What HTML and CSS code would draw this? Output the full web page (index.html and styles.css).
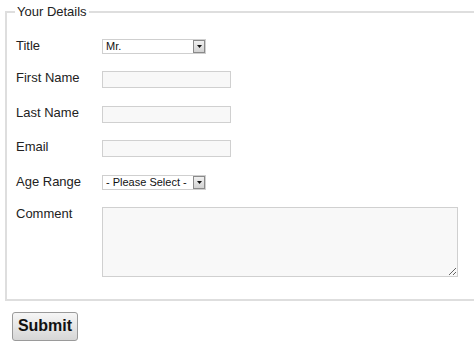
FILE: index.html
```html
<!DOCTYPE html>
<html lang="en">
<head>
    <meta charset="UTF-8">
    <title>Your Details</title>
    <link rel="stylesheet" href="styles.css">
</head>
<body>
    <form class="details-form">
        <fieldset class="details">
            <legend>Your Details</legend>
            <div class="form-grid">
                <label for="title">Title</label>
                <div class="select-box">
                    <select id="title">
                        <option>Mr.</option>
                        <option>Mrs.</option>
                        <option>Ms.</option>
                    </select>
                    <span class="arrow"><svg width="5" height="3" viewBox="0 0 5 3"><path d="M0 0h5L2.5 3z" fill="#111"/></svg></span>
                </div>

                <label for="first-name">First Name</label>
                <input type="text" id="first-name">

                <label for="last-name">Last Name</label>
                <input type="text" id="last-name">

                <label for="email">Email</label>
                <input type="text" id="email">

                <label for="age">Age Range</label>
                <div class="select-box">
                    <select id="age">
                        <option>- Please Select -</option>
                        <option>18 - 25</option>
                        <option>26 - 40</option>
                        <option>41+</option>
                    </select>
                    <span class="arrow"><svg width="5" height="3" viewBox="0 0 5 3"><path d="M0 0h5L2.5 3z" fill="#111"/></svg></span>
                </div>

                <label for="comment">Comment</label>
                <textarea id="comment"></textarea>
            </div>
        </fieldset>
        <button type="submit" class="submit-button">Submit</button>
    </form>
</body>
</html>
```

FILE: styles.css
```css
body {
    margin: 4px 0 4px 5px;
    background-color: #fff;
    font-family: "Liberation Sans", Arial, sans-serif;
    color: #222;
    overflow: hidden;
}
.details {
    margin: 0;
    padding: 20px 8px 22px 8px;
    border: 2px solid #dedede;
    border-right: none;
}
.details legend {
    padding: 0 2px;
    font-size: 13px;
    line-height: 15px;
    color: #222;
}
.form-grid {
    display: grid;
    grid-template-columns: 87px 356px;
    grid-template-rows: 15px 17px 17px 17px 15px 70px;
    row-gap: 17.4px;
    align-items: start;
}
.form-grid label {
    margin: -1px 0 0 1px;
    font-size: 13px;
    line-height: 15px;
}
.form-grid input {
    width: 129px;
    height: 17px;
    margin: 0;
    padding: 0 3px;
    box-sizing: border-box;
    border: 1px solid #d0d0d0;
    background-color: #f8f8f8;
    outline: none;
}
.select-box {
    display: flex;
    width: 104px;
    height: 15px;
    box-sizing: border-box;
    border: 1px solid #cfcfcf;
    background-color: #fff;
}
.select-box select {
    flex: 1;
    min-width: 0;
    height: 13px;
    margin: 0;
    padding: 0 0 0 3px;
    border: none;
    background: transparent;
    appearance: none;
    -webkit-appearance: none;
    font-family: "Liberation Sans", Arial, sans-serif;
    font-size: 11px;
    line-height: 13px;
    color: #111;
    outline: none;
}
.select-box .arrow {
    display: flex;
    align-items: center;
    justify-content: center;
    width: 12px;
    height: 13px;
    box-sizing: border-box;
    border: 1px solid #8a8a8a;
    background: linear-gradient(#f0f0f0, #d2d2d2);
}
.form-grid textarea {
    width: 356px;
    height: 70px;
    margin: 0;
    box-sizing: border-box;
    border: 1px solid #d0d0d0;
    background-color: #f8f8f8;
    outline: none;
}
.submit-button {
    margin: 11px 0 0 7px;
    width: 66px;
    height: 29px;
    padding: 0;
    border: 1px solid #9a9a9a;
    border-radius: 3px;
    background: linear-gradient(#f6f6f6, #d6d6d6);
    font-family: "Liberation Sans", Arial, sans-serif;
    font-size: 16px;
    font-weight: bold;
    color: #111;
}
```
